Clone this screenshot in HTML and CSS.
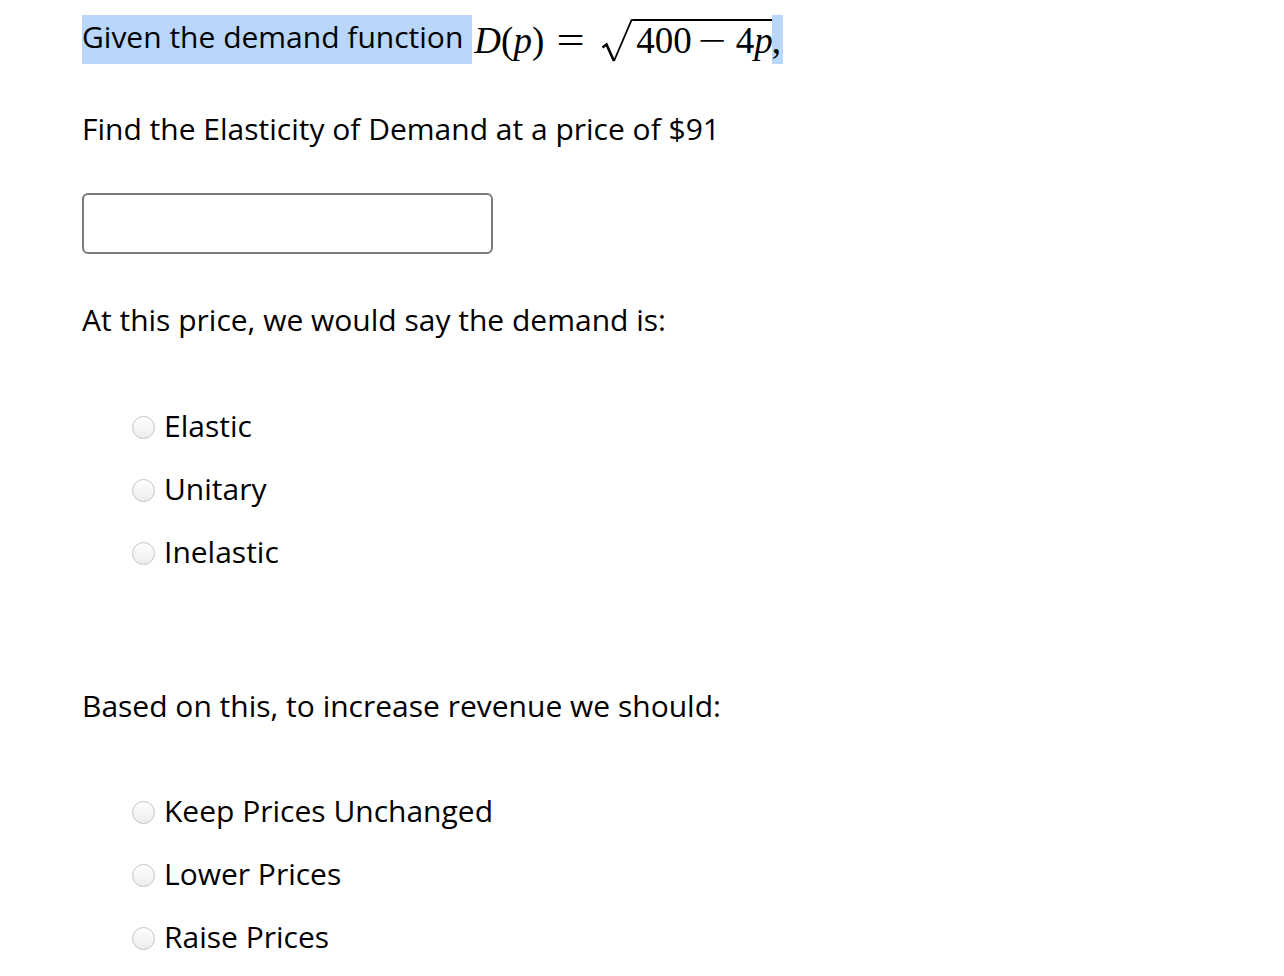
FILE: index.html
```html
<!DOCTYPE html>
<html>
<head>
<meta charset="utf-8">
<link rel="stylesheet" href="styles.css">
</head>
<body>
<div class="page">
  <p class="q1"><span class="hl">Given the demand function</span><span class="math"><span class="mi">D</span><span class="mo">(</span><span class="mi">p</span><span class="mo">)</span><span class="op eq">=</span><span class="sqrt"><svg class="rad" width="31" height="44" viewBox="0 0 31 44"><path d="M0.5 28.5 L4.5 25.5 L12 42" fill="none" stroke="#000" stroke-width="2.6" stroke-linejoin="miter"/><path d="M12 42 L29.5 1.2 L31 1.2" fill="none" stroke="#000" stroke-width="1.8"/></svg><span class="radicand">400<span class="op minus">−</span>4<span class="mi">p</span></span></span><span class="hl2">,</span></span></p>

  <p class="q2">Find the Elasticity of Demand at a price of $91</p>

  <input class="answer" type="text">

  <p class="q3">At this price, we would say the demand is:</p>

  <ul class="options first">
    <li><span class="radio"></span><span class="lbl">Elastic</span></li>
    <li><span class="radio"></span><span class="lbl">Unitary</span></li>
    <li><span class="radio"></span><span class="lbl">Inelastic</span></li>
  </ul>

  <p class="q4">Based on this, to increase revenue we should:</p>

  <ul class="options second">
    <li><span class="radio"></span><span class="lbl">Keep Prices Unchanged</span></li>
    <li><span class="radio"></span><span class="lbl">Lower Prices</span></li>
    <li><span class="radio"></span><span class="lbl">Raise Prices</span></li>
  </ul>
</div>
</body>
</html>
```

FILE: styles.css
```css
html, body {
  margin: 0;
  padding: 0;
  background: #fff;
}
body {
  font-family: "Open Sans", "Liberation Sans", sans-serif;
  font-size: 30px;
  color: #000;
}
.page {
  padding-left: 82px;
  padding-top: 15px;
}
p { margin: 0; }
.q1 {
  height: 49px;
  display: flex;
  align-items: flex-start;
  white-space: nowrap;
}
.hl {
  background: #b9d6fb;
  display: inline-block;
  height: 49px;
  line-height: 44px;
  box-sizing: border-box;
  padding-right: 9px;
}
.math {
  font-family: "Liberation Serif", "DejaVu Serif", serif;
  font-size: 37px;
  display: inline-flex;
  align-items: flex-start;
  height: 49px;
  line-height: 51px;
  padding-left: 2px;
}
.mi { font-style: italic; }
.op {
  display: inline-block;
  text-align: center;
  transform: scaleX(1.35);
}
.eq {
  width: 23px;
  margin: 0 20px 0 15px;
}
.sqrt {
  display: inline-flex;
  align-items: flex-start;
  margin-top: 4px;
}
.rad { display: block; margin-right: 0; }
.radicand {
  border-top: 2px solid #000;
  line-height: 39px;
  padding-left: 3px;
  padding-right: 0;
}
.minus {
  width: 22px;
  margin: 0 13px 0 9px;
}
.hl2 {
  background: #b9d6fb;
  height: 49px;
  line-height: 51px;
  display: inline-block;
  padding-right: 2px;
  margin-left: -1px;
}
.q2 {
  margin-top: 45px;
  line-height: 40px;
}
.answer {
  display: block;
  margin-top: 44px;
  width: 411px;
  height: 61px;
  box-sizing: border-box;
  border: 2px solid #7b7b7b;
  border-radius: 6px;
  background: #fff;
  outline: none;
}
.q3 {
  margin-top: 46px;
  line-height: 40px;
}
.options {
  list-style: none;
  margin: 0;
  padding: 0 0 0 50px;
}
.options li {
  display: flex;
  align-items: center;
  height: 63px;
}
.first { margin-top: 54px; }
.second { margin-top: 53px; }
.radio {
  width: 23px;
  height: 23px;
  border-radius: 50%;
  border: 1px solid #c4c4c4;
  background: linear-gradient(#ffffff, #ececec);
  box-sizing: border-box;
  margin-right: 9px;
  flex: none;
  position: relative;
  top: 2px;
}
.lbl { line-height: 40px; }
.q4 {
  margin-top: 103px;
  line-height: 40px;
}
```
